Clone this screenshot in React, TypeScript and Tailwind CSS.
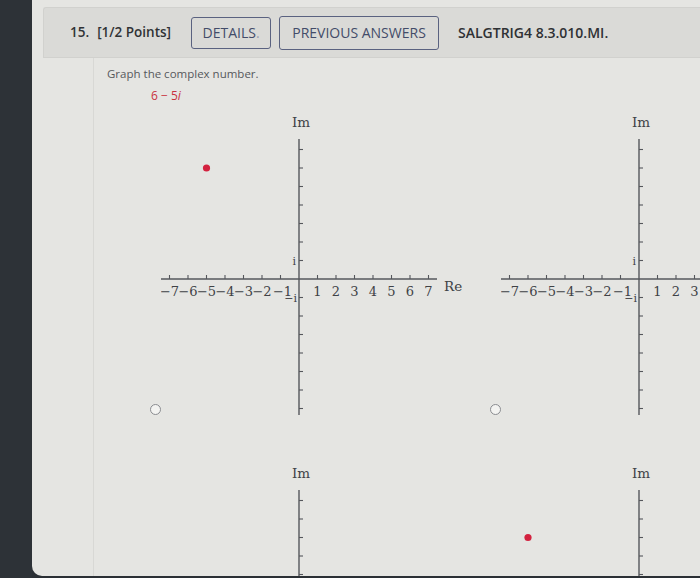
import React from 'react';

const UNIT = 18.5;
const OX = 138;
const OY = 166;
const TICKS = [-7, -6, -5, -4, -3, -2, -1, 1, 2, 3, 4, 5, 6, 7];

function Plane({ dot }: { dot?: [number, number] }) {
  return (
    <svg width="305" height="306" viewBox="0 0 305 306" className="block shrink-0">
      <g stroke="#55575c" strokeWidth="1.4" fill="none">
        <line x1="0" y1={OY} x2="276" y2={OY} />
        <line x1={OX} y1="26" x2={OX} y2="302" />
        {TICKS.map((t) => (
          <line key={'h' + t} x1={OX + t * UNIT} y1={OY} x2={OX + t * UNIT} y2={OY - 4} strokeWidth="1.1" />
        ))}
        {TICKS.map((t) => (
          <line key={'v' + t} x1={OX} y1={OY - t * UNIT} x2={OX + 4} y2={OY - t * UNIT} strokeWidth="1.1" />
        ))}
      </g>
      <g fill="#404246" fontFamily="'DejaVu Serif', 'Liberation Serif', serif" fontSize="13">
        {TICKS.map((t) => (
          <text
            key={'l' + t}
            x={OX + t * UNIT + (t === -1 ? 2 : 0)}
            y={OY + 17}
            textAnchor="middle"
          >
            {t < 0 ? '\u2212' + -t : t}
          </text>
        ))}
        <text x={OX - 3} y={OY - UNIT + 4} textAnchor="end" fontSize="11">
          i
        </text>
        <text x={OX - 2} y={OY + UNIT + 4} textAnchor="end" fontSize="11">
          {'\u2212i'}
        </text>
        <text x={OX + 2} y="14" textAnchor="middle" fontSize="13.5">
          Im
        </text>
        <text x="283" y={OY + 12} fontSize="13.5">
          Re
        </text>
      </g>
      {dot && <circle cx={OX + dot[0] * UNIT} cy={OY - dot[1] * UNIT} r="3.6" fill="#d3223f" />}
    </svg>
  );
}

function Choice({ dot }: { dot?: [number, number] }) {
  return (
    <div className="flex items-end">
      <div className="mb-[4px] h-[11px] w-[11px] shrink-0 rounded-full border border-[#8a8c90] bg-[#f3f3f1]" />
      <Plane dot={dot} />
    </div>
  );
}

export default function App() {
  return (
    <div
      className="flex h-[578px] w-[700px] overflow-hidden bg-[#2b3035]"
      style={{ fontFamily: "'Open Sans', 'Liberation Sans', sans-serif" }}
    >
      <div className="w-[32px] shrink-0 bg-[#2d3237]" />
      <div className="h-[576px] min-w-0 flex-1 overflow-hidden rounded-bl-[10px] bg-[#e5e5e2] pl-[11px] pt-[7px]">
        <div className="flex h-[51px] items-center rounded-tl-[3px] border border-r-0 border-[#d1d1ce] bg-[#dadad7] pl-[26px] text-[#303235]">
          <span className="text-[13.5px] font-semibold">15.</span>
          <span className="ml-[8px] text-[13.5px] font-semibold">[1/2 Points]</span>
          <div className="ml-[20px] flex h-[32px] w-[80px] items-center justify-center rounded-[3px] border-[1.5px] border-[#5a6280] text-[14px] text-[#434c69]">
            DETAILS<span className="text-[#9aa0b0]">.</span>
          </div>
          <div className="ml-[8px] flex h-[34px] w-[160px] items-center justify-center rounded-[3px] border-[1.5px] border-[#5a6280] text-[14px] text-[#434c69]">
            PREVIOUS ANSWERS
          </div>
          <span className="ml-[19px] text-[14px] font-semibold text-[#2f3134]">SALGTRIG4 8.3.010.MI.</span>
        </div>
        <div className="ml-[50px] h-[600px] border-l border-[#d8d8d5] pl-[13px] pt-[7px]">
          <div className="text-[11.5px] leading-[17px] text-[#56585c]">Graph the complex number.</div>
          <div className="ml-[44px] mt-[5px] text-[12px] leading-[17px] text-[#c9323f]">
            6 {'\u2212'} 5<i>i</i>
          </div>
          <div className="ml-[43px] mt-[9px] grid w-[700px] grid-cols-[340px_340px] gap-y-[45px]">
            <Choice dot={[-5, 6]} />
            <Choice dot={[6, -5]} />
            <Choice dot={[5, -6]} />
            <Choice dot={[-6, 5]} />
          </div>
        </div>
      </div>
    </div>
  );
}
